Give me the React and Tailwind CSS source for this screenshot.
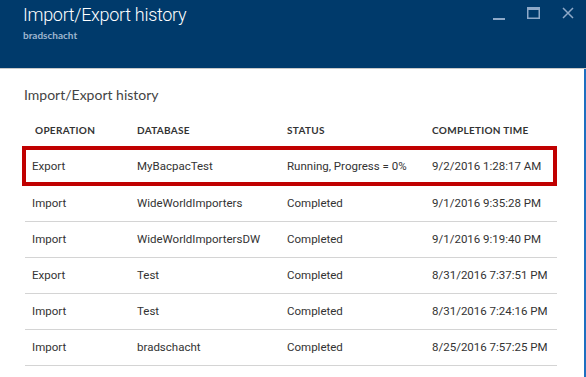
const rows = [
  ["Import", "WideWorldImporters", "Completed", "9/1/2016 9:35:28 PM"],
  ["Import", "WideWorldImportersDW", "Completed", "9/1/2016 9:19:40 PM"],
  ["Export", "Test", "Completed", "8/31/2016 7:37:51 PM"],
  ["Import", "Test", "Completed", "8/31/2016 7:24:16 PM"],
  ["Import", "bradschacht", "Completed", "8/25/2016 7:57:25 PM"],
];

const cols = "grid grid-cols-[105px_150px_145px_1fr] items-center whitespace-nowrap";
const cell = "text-[11.5px] text-[#333] font-[Roboto,sans-serif]";

function Row({ cells }) {
  return (
    <div className={`${cols} ${cell} h-[36px] pl-[7px] pt-[1px] border-b border-[#d4d4d4]`}>
      {cells.map((c, i) => (
        <div key={i}>{c}</div>
      ))}
    </div>
  );
}

export default function App() {
  return (
    <div className="w-[586px] h-[377px] bg-white overflow-hidden font-[Lato,sans-serif]">
      <div className="h-[69px] bg-[#003a6b] border-b border-[#c8c8c8] flex justify-between">
        <div className="pl-[23px] pt-[2px]">
          <div className="text-[18px] font-light text-white leading-[26px] tracking-[-0.3px] font-[Roboto,sans-serif]">Import/Export history</div>
          <div className="text-[10px] font-bold text-[#9fb6cf] leading-[12px] mt-[1px]">bradschacht</div>
        </div>
        <div className="flex items-start gap-[22px] pr-[12px] pt-[7px]">
          <svg width="12" height="12" viewBox="0 0 12 12" className="mt-[1px]">
            <rect x="0" y="10" width="12" height="2" fill="#8ea9c8" />
          </svg>
          <svg width="13" height="12" viewBox="0 0 13 12">
            <rect x="0.75" y="0.75" width="11.5" height="10.5" fill="none" stroke="#8ea9c8" strokeWidth="1.5" />
            <rect x="0" y="0" width="13" height="3" fill="#8ea9c8" />
          </svg>
          <svg width="12" height="12" viewBox="0 0 12 12">
            <path d="M1 1 L11 11 M11 1 L1 11" stroke="#8ea9c8" strokeWidth="1.5" />
          </svg>
        </div>
      </div>
      <div className="h-[308px] border-r-2 border-[#1e6fc0] pl-[22px] pr-[27px]">
        <div className="pt-[16px] pl-[2px] text-[14px] text-[#444] leading-[20px]">Import/Export history</div>
        <div className={`${cols} h-[26px] mt-[12px] pl-[10px] text-[10px] font-bold text-[#333] tracking-[0.3px]`}>
          <div className="ml-[3px]">OPERATION</div>
          <div>DATABASE</div>
          <div>STATUS</div>
          <div>COMPLETION TIME</div>
        </div>
        <div className={`${cols} ${cell} h-[40px] mt-[3px] pl-[6px] pt-[2px] border-4 border-[#c00000]`}>
          <div>Export</div>
          <div>MyBacpacTest</div>
          <div>Running, Progress = 0%</div>
          <div>9/2/2016 1:28:17 AM</div>
        </div>
        <div className="pl-[3px]">
          {rows.map((r, i) => (
            <Row key={i} cells={r} />
          ))}
        </div>
      </div>
    </div>
  );
}
